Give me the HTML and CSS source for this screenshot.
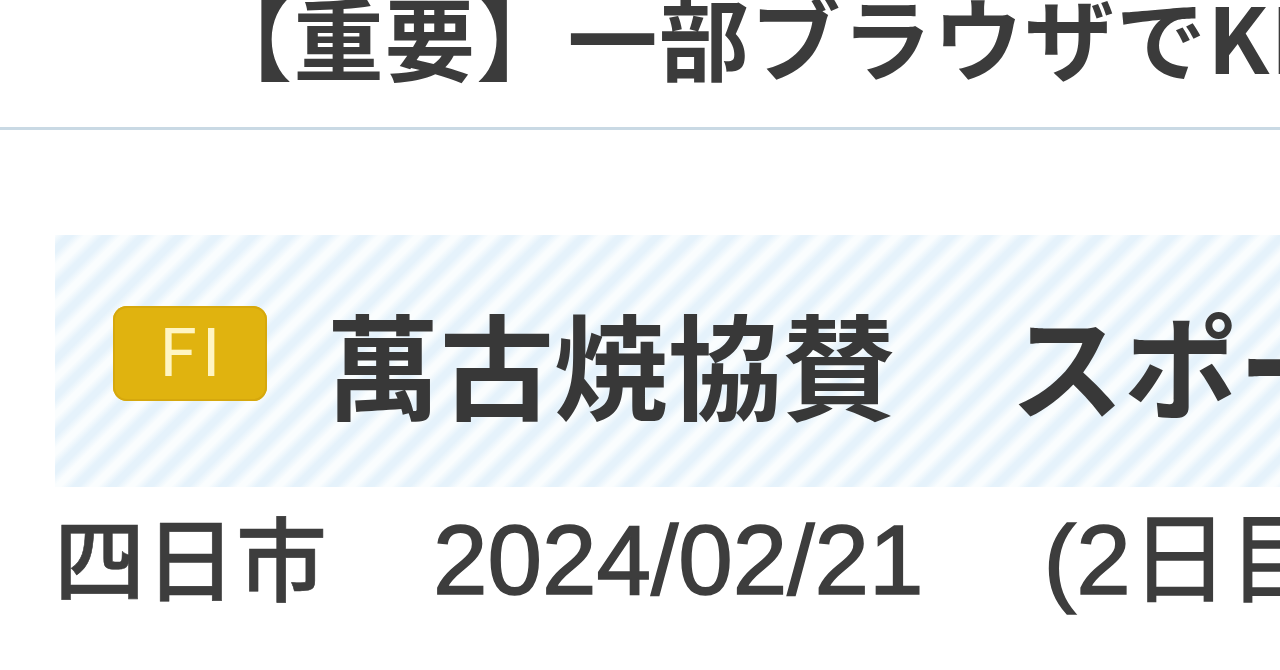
FILE: index.html
```html
<!DOCTYPE html>
<html lang="ja">
<head>
<meta charset="utf-8">
<title>萬古焼協賛 スポーツニッポン杯</title>
<link rel="stylesheet" href="styles.css">
</head>
<body>
<header class="notice">
  <p class="notice-text">【重要】一部ブラウザでKEIRIN.JPが正常に表示されない事象について</p>
</header>
<section class="race">
  <div class="race-head">
    <span class="grade">FI</span>
    <h1 class="race-title">萬古焼協賛　スポーツニッポン杯</h1>
  </div>
  <div class="race-meta">
    <span class="venue">四日市</span>
    <span class="date">2024/02/21</span>
    <span class="day">(2日目)</span>
  </div>
</section>
</body>
</html>
```

FILE: styles.css
```css
html, body {
  margin: 0;
  padding: 0;
  background: #ffffff;
}
body {
  width: 1280px;
  height: 670px;
  overflow: hidden;
  font-family: "Noto Sans CJK JP", sans-serif;
  color: #3b3b3b;
}
.notice {
  height: 127px;
  border-bottom: 3px solid #c9d9e4;
  padding-left: 202px;
  overflow: hidden;
  white-space: nowrap;
}
.notice-text {
  margin: -10px 0 0 0;
  font-family: "Noto Sans CJK JP", sans-serif;
  font-weight: 700;
  font-size: 90px;
  line-height: 90px;
  letter-spacing: 1.4px;
  color: #3b3b3b;
}
.race {
  padding: 105px 0 0 55px;
}
.race-head {
  display: flex;
  align-items: flex-start;
  height: 252px;
  box-sizing: border-box;
  padding: 71px 0 0 58px;
  white-space: nowrap;
  overflow: hidden;
  background: repeating-linear-gradient(135deg,
    #fafdfe 0, #e5f2fb 8px, #e5f2fb 13px, #fafdfe 21px, #fafdfe 26px);
}
.grade {
  flex: none;
  display: flex;
  align-items: center;
  justify-content: center;
  width: 154px;
  height: 95px;
  border-radius: 14px;
  background: #e0b30f;
  box-shadow: inset 0 0 0 2px #d6a80d;
  color: #fff5c2;
  font-family: Roboto, sans-serif;
  font-weight: 400;
  font-size: 67px;
  line-height: 1;
  letter-spacing: 5px;
  text-indent: 5px;
  margin-right: 59px;
}
.race-title {
  margin: 0;
  font-family: "Noto Sans CJK JP", sans-serif;
  font-weight: 700;
  font-size: 114px;
  line-height: 112px;
  color: #383838;
}
.race-meta {
  display: flex;
  align-items: baseline;
  margin-top: 22px;
  white-space: nowrap;
  font-family: "Liberation Sans", "Noto Sans CJK JP", sans-serif;
  font-weight: 400;
  color: #3d3d3d;
}
.venue {
  font-family: "Noto Sans CJK JP", sans-serif;
  font-weight: 500;
  font-size: 91px;
  line-height: 91px;
  margin-left: -1px;
  margin-right: 106px;
  -webkit-text-stroke: 0.6px #3d3d3d;
}
.date {
  font-size: 98px;
  line-height: 91px;
  -webkit-text-stroke: 1.6px #3d3d3d;
  margin-right: 120px;
}
.day {
  font-size: 98px;
  line-height: 91px;
  -webkit-text-stroke: 1.6px #3d3d3d;
}
```
